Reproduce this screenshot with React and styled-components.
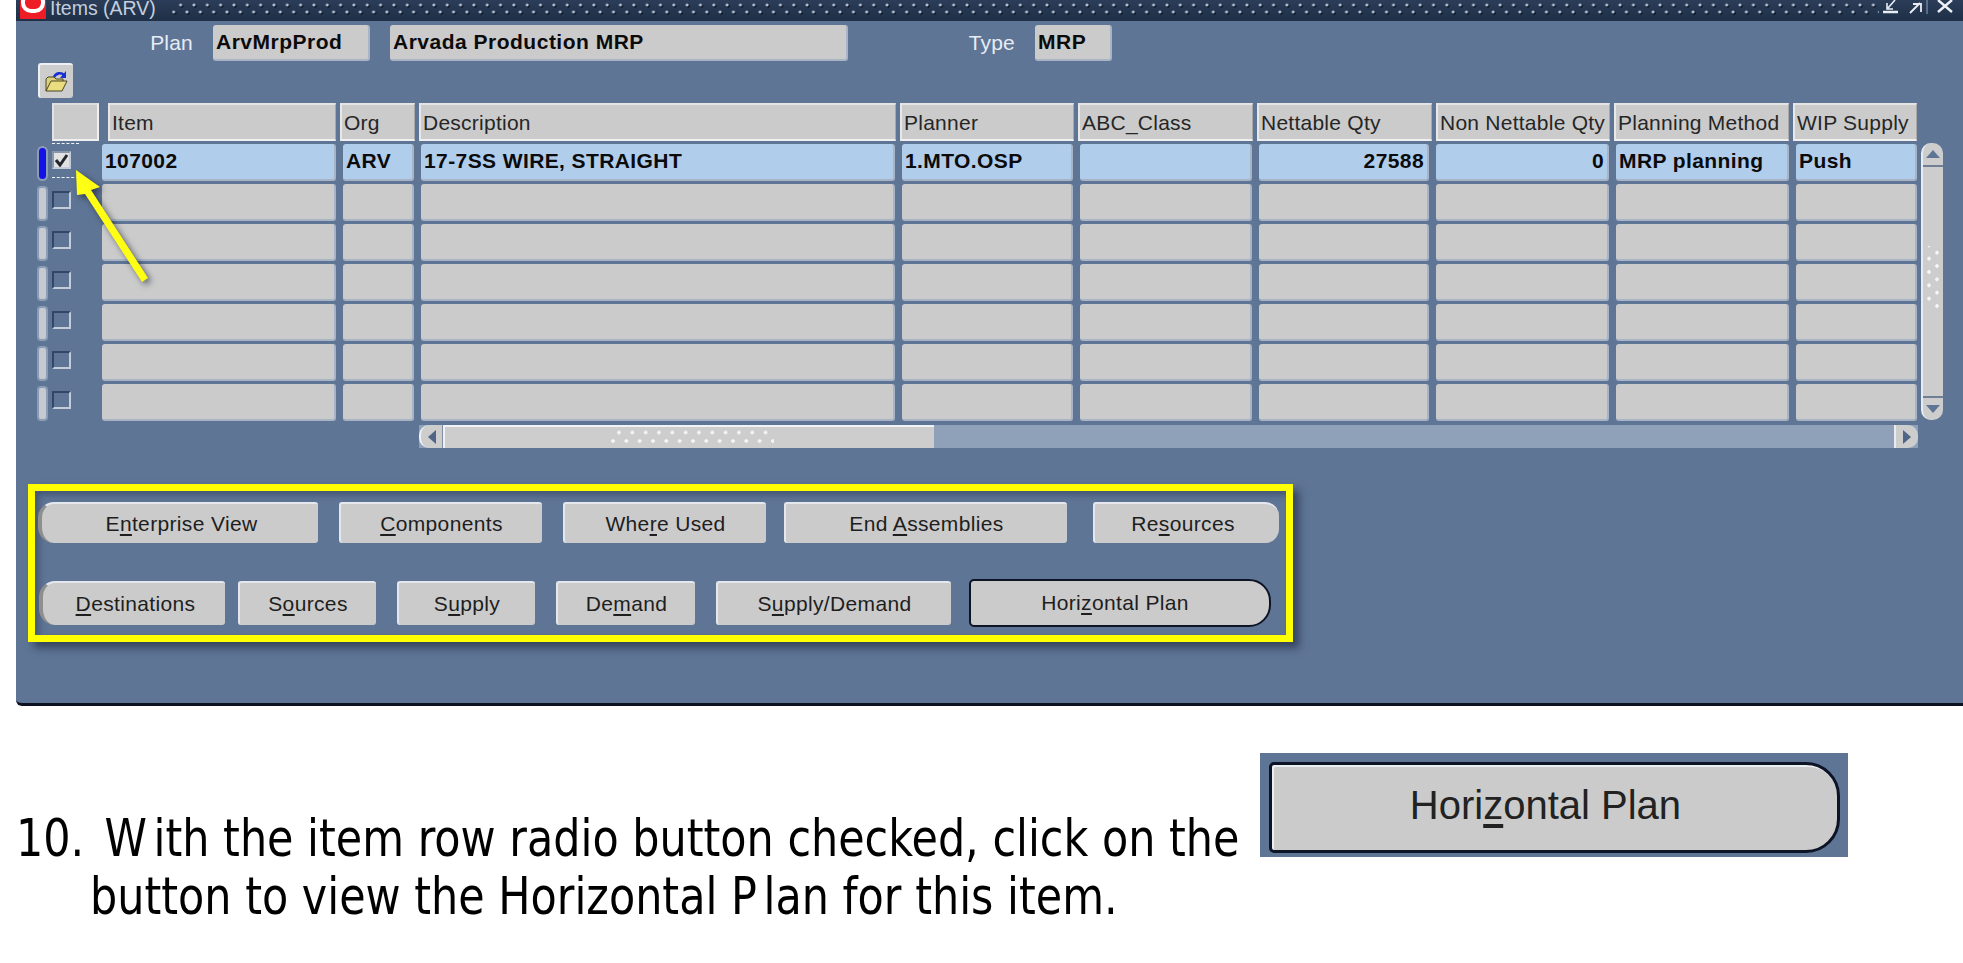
import React from "react";
import styled, { createGlobalStyle } from "styled-components";

const GlobalStyle = createGlobalStyle`
  html, body {
    margin: 0;
    padding: 0;
    background: #fff;
    overflow: hidden;
  }
`;

const Page = styled.div`
  width: 1963px;
  height: 963px;
  font-family: "Liberation Sans", Arial, sans-serif;
  overflow: hidden;
`;

const Window = styled.div`
  position: relative;
  margin-left: 16px;
  width: 1947px;
  height: 706px;
  box-sizing: border-box;
  background: #5f7596;
  border-bottom: 3px solid #0b1120;
  border-bottom-left-radius: 6px;
  overflow: hidden;
`;

const TitleBar = styled.div`
  display: flex;
  align-items: flex-start;
  height: 21px;
  background: linear-gradient(#2b3d58, #1e2f47);
`;

const OracleLogo = styled.svg`
  width: 26px;
  height: 19px;
  margin-left: 4px;
  flex: none;
`;

const TitleText = styled.span`
  margin-left: 4px;
  font-size: 19.5px;
  line-height: 16px;
  color: #c3cfdd;
  white-space: nowrap;
`;

const TitleDots = styled.div`
  flex: 1;
  height: 21px;
  margin-left: 16px;
  background-image: radial-gradient(circle, #aebdd0 0 1.2px, transparent 1.8px),
    radial-gradient(circle, #aebdd0 0 1.2px, transparent 1.8px),
    radial-gradient(circle, #0c1626 0 1.4px, transparent 2px),
    radial-gradient(circle, #0c1626 0 1.4px, transparent 2px);
  background-size: 13.33px 14px;
  background-position: 2px -2px, -5px 5px, 3px -1px, -4px 6px;
  background-repeat: repeat-x;
`;

const WindowControls = styled.svg`
  width: 84px;
  height: 21px;
  flex: none;
`;

const PlanRow = styled.div`
  display: flex;
  align-items: center;
  height: 36px;
  margin-top: 4px;
`;

const FieldLabel = styled.label`
  width: ${(p) => p.$w}px;
  margin-right: 20px;
  text-align: right;
  font-size: 21px;
  letter-spacing: 0.2px;
  color: #e6ecf3;
`;

const Field = styled.div`
  width: ${(p) => p.$w}px;
  height: 36px;
  margin-right: ${(p) => p.$mr || 0}px;
  box-sizing: border-box;
  padding: 0 3px;
  background: #cbcbcb;
  border-right: 2px solid #a8b4c6;
  border-bottom: 2px solid #a8b4c6;
  border-radius: 3px;
  font-size: 21px;
  font-weight: 700;
  letter-spacing: 0.5px;
  line-height: 33px;
  color: #0b0b0b;
  white-space: nowrap;
`;

const ToolRow = styled.div`
  height: 35px;
  margin-top: 2px;
  padding-left: 22px;
`;

const ToolButton = styled.div`
  display: flex;
  align-items: center;
  justify-content: center;
  width: 35px;
  height: 35px;
  box-sizing: border-box;
  background: #cdcdcd;
  border-top: 2px solid #eceff3;
  border-left: 2px solid #eceff3;
  border-radius: 3px;
`;

const HeaderRow = styled.div`
  display: flex;
  height: 38px;
  margin-top: 5px;
  padding-left: 36px;
`;

const SelectAll = styled.div`
  width: 47px;
  height: 38px;
  margin-right: 9px;
  box-sizing: border-box;
  background: #cbcbcb;
  border-top: 2px solid #dedede;
  border-left: 2px solid #e2e2e2;
  border-right: 2px solid #f0f0f0;
  border-bottom: 2px solid #f0f0f0;
`;

const HeaderSlot = styled.div`
  width: ${(p) => p.$w}px;
  flex: none;
  box-sizing: border-box;
  padding-right: ${(p) => (p.$last ? 0 : 4)}px;
`;

const HeaderCell = styled.div`
  height: 38px;
  box-sizing: border-box;
  padding-left: 2px;
  background: #cbcbcb;
  border-top: 2px solid #e4e4e4;
  border-left: 2px solid #e8e8e8;
  border-bottom: 2px solid #f0f0f0;
  border-right: 1px solid #a8a8a8;
  font-size: 21px;
  letter-spacing: 0.25px;
  line-height: 35px;
  color: #262626;
  white-space: nowrap;
  overflow: hidden;
`;

const TableArea = styled.div`
  display: flex;
  margin-top: 2px;
  padding-left: 21px;
`;

const Rows = styled.div`
  width: 1880px;
  padding-top: 1px;
`;

const Row = styled.div`
  display: flex;
  height: 40px;
`;

const Indicator = styled.div`
  width: 11px;
  height: 35px;
  margin: 2px 4px 0 0;
  box-sizing: border-box;
  border-radius: ${(p) => (p.$active ? 6 : 4)}px;
  border: 2px solid #8b9db6;
  background: ${(p) => (p.$active ? "#1212e6" : "#c6c9ce")};
`;

const CheckCell = styled.div`
  width: 50px;
  flex: none;
`;

const CheckFocus = styled.div`
  width: 27px;
  height: 35px;
  margin-top: -1px;
  padding-top: 7px;
  box-sizing: border-box;
  border-top: 1px dashed ${(p) => (p.$active ? "#f0f4f8" : "transparent")};
  border-bottom: 1px dashed ${(p) => (p.$active ? "#f0f4f8" : "transparent")};
`;

const CheckBox = styled.div`
  width: 19px;
  height: 18px;
  box-sizing: border-box;
  border-top: 2px solid ${(p) => (p.$checked ? "#8a97aa" : "#33466a")};
  border-left: 2px solid ${(p) => (p.$checked ? "#8a97aa" : "#33466a")};
  border-right: 2px solid #c3ccda;
  border-bottom: 2px solid #c3ccda;
  background: ${(p) => (p.$checked ? "#e2e2e2" : "transparent")};
`;

const CellSlot = styled.div`
  width: ${(p) => p.$w}px;
  flex: none;
  box-sizing: border-box;
  padding-right: ${(p) => (p.$last ? 0 : 7)}px;
`;

const Cell = styled.div`
  height: 37px;
  box-sizing: border-box;
  padding: 0 3px;
  background: ${(p) => (p.$selected ? "#b1cdec" : "#cbcbcb")};
  border-right: 2px solid #a8b4c6;
  border-bottom: 2px solid #a8b4c6;
  border-radius: 3px;
  font-size: 21px;
  font-weight: 700;
  letter-spacing: 0.4px;
  line-height: 34px;
  color: #0b0b0b;
  text-align: ${(p) => (p.$right ? "right" : "left")};
  white-space: nowrap;
`;

const VScroll = styled.div`
  display: flex;
  flex-direction: column;
  width: 22px;
  height: 277px;
  margin-left: 4px;
  box-sizing: border-box;
  background: #cdcdcd;
  border-left: 2px solid #e8ecf1;
  border-radius: 10px;
  overflow: hidden;
`;

const VScrollEnd = styled.div`
  display: flex;
  align-items: center;
  justify-content: center;
  height: 22px;
  flex: none;
  border-${(p) => (p.$end ? "top" : "bottom")}: 2px solid #6f7f96;
`;

const VThumb = styled.div`
  flex: 1;
  display: flex;
  align-items: center;
  padding-left: 4px;
`;

const VGrip = styled.div`
  width: 14px;
  height: 62px;
  margin-top: -10px;
  background-image: radial-gradient(circle, #f4f4f4 0 1.5px, transparent 2.1px),
    radial-gradient(circle, #f4f4f4 0 1.5px, transparent 2.1px);
  background-size: 14px 13.33px, 14px 13.33px;
  background-position: -5px 6px, 3px 0;
`;

const HScroll = styled.div`
  display: flex;
  width: 1499px;
  height: 23px;
  margin: 1px 0 0 403px;
  background: #8fa1b9;
`;

const HScrollLeft = styled.div`
  display: flex;
  align-items: center;
  justify-content: center;
  width: 24px;
  flex: none;
  box-sizing: border-box;
  background: #cdcdcd;
  border-radius: 10px 0 0 10px;
  border-left: 2px solid #eef1f5;
  border-right: 1px solid #7e8ea5;
`;

const HThumb = styled.div`
  display: flex;
  justify-content: center;
  align-items: center;
  width: 491px;
  flex: none;
  box-sizing: border-box;
  background: #cdcdcd;
  border-top: 2px solid #f0f2f5;
  border-left: 2px solid #f0f2f5;
`;

const HGrip = styled.div`
  width: 164px;
  height: 16px;
  margin-left: 4px;
  background-image: radial-gradient(circle, #f4f4f4 0 1.5px, transparent 2.1px),
    radial-gradient(circle, #f4f4f4 0 1.5px, transparent 2.1px);
  background-size: 13.33px 16px;
  background-position: 2.33px -5.5px, -3.67px 3.5px;
  background-repeat: repeat-x;
`;

const HTrackFill = styled.div`
  flex: 1;
`;

const HScrollRight = styled.div`
  display: flex;
  align-items: center;
  justify-content: center;
  width: 24px;
  flex: none;
  box-sizing: border-box;
  background: #cdcdcd;
  border-left: 2px solid #e8ecf1;
  border-radius: 0 10px 10px 0;
`;

const ButtonBox = styled.div`
  width: 1265px;
  height: 158px;
  margin: 36px 0 0 12px;
  padding: 11px 0 0 3px;
  box-sizing: border-box;
  border: 7px solid #ffff00;
  box-shadow: 6px 6px 8px rgba(18, 28, 48, 0.55),
    inset 4px 4px 6px rgba(18, 28, 48, 0.35);
`;

const ButtonRow = styled.div`
  display: flex;
  align-items: ${(p) => (p.$second ? "center" : "flex-start")};
  height: ${(p) => p.$h}px;
  margin-bottom: 38px;
`;

const FormButton = styled.div`
  display: flex;
  align-items: center;
  justify-content: center;
  width: ${(p) => p.$w}px;
  height: ${(p) => p.$h}px;
  margin-left: ${(p) => p.$gap || 0}px;
  flex: none;
  box-sizing: border-box;
  padding-left: ${(p) => (p.$shape === "left" ? 3 : 0)}px;
  padding-right: ${(p) => (p.$shape === "right" ? 8 : 0)}px;
  background: #cbcbcb;
  border-top: 2px solid #e4e7ec;
  border-left: ${(p) => (p.$shape === "left" ? "4px solid #8e8e8e" : "2px solid #e4e7ec")};
  border-radius: ${(p) =>
    p.$shape === "left"
      ? "16px 3px 3px 16px"
      : p.$shape === "right"
      ? "3px 14px 14px 3px"
      : "3px"};
  font-size: 21px;
  letter-spacing: 0.35px;
  color: #1e1e1e;
  white-space: nowrap;

  u {
    text-underline-offset: 3px;
  }
`;

const DefaultButton = styled(FormButton)`
  padding-right: 10px;
  border: 2px solid #0d1426;
  border-radius: 5px 22px 22px 5px;
  background: #cbcbcb;
`;

const Instructions = styled.div`
  margin-top: 47px;
  color: #000;
  font-family: "DejaVu Sans", sans-serif;
  font-size: 52px;
  line-height: 58px;
`;

const FirstLine = styled.div`
  display: flex;
  align-items: flex-start;
`;

const LineText = styled.div`
  width: ${(p) => p.$w}px;
  margin: ${(p) => p.$top || 0}px 0 0 ${(p) => p.$left}px;
  flex: none;
  white-space: nowrap;
  transform: scaleX(${(p) => p.$sx});
  transform-origin: left center;
`;

const Kern = styled.span`
  margin-left: 8px;
`;

const ButtonSnippet = styled.div`
  width: 588px;
  height: 104px;
  flex: none;
  padding: 9px 8px 4px 9px;
  box-sizing: border-box;
  background: #5f7596;
`;

const SnippetButton = styled.div`
  display: flex;
  align-items: center;
  justify-content: center;
  height: 91px;
  box-sizing: border-box;
  padding: 0 18px 6px 0;
  background: #cbcbcb;
  border: 3px solid #0d1426;
  border-radius: 5px 34px 34px 5px;
  box-shadow: inset 2px 2px 0 #eceff2;
  font-family: "Liberation Sans", Arial, sans-serif;
  font-size: 40px;
  line-height: 48px;
  color: #222;

  u {
    text-underline-offset: 5px;
  }
`;

const ArrowOverlay = styled.svg`
  position: absolute;
  left: 44px;
  top: 160px;
  width: 110px;
  height: 135px;
  overflow: visible;
  filter: drop-shadow(3px 3px 3px rgba(15, 22, 40, 0.6));
`;

const headers = [
  ["Item", 232],
  ["Org", 79],
  ["Description", 481],
  ["Planner", 178],
  ["ABC_Class", 179],
  ["Nettable Qty", 179],
  ["Non Nettable Qty", 178],
  ["Planning Method", 179],
  ["WIP Supply", 124],
];

const cellWidths = [241, 78, 481, 178, 179, 177, 180, 180, 121];

const firstRow = [
  "107002",
  "ARV",
  "17-7SS WIRE, STRAIGHT",
  "1.MTO.OSP",
  "",
  "27588",
  "0",
  "MRP planning",
  "Push",
];

function TableRow({ values, selected }) {
  return (
    <Row>
      <Indicator $active={selected} />
      <CheckCell>
        <CheckFocus $active={selected}>
          <CheckBox $checked={selected}>
            {selected && (
              <svg width="15" height="14" viewBox="0 0 15 14">
                <path d="M2 7l4 5L13 2" fill="none" stroke="#23262e" strokeWidth="3" />
              </svg>
            )}
          </CheckBox>
        </CheckFocus>
      </CheckCell>
      {cellWidths.map((w, i) => (
        <CellSlot key={i} $w={w} $last={i === cellWidths.length - 1}>
          <Cell $selected={selected} $right={i === 5 || i === 6}>
            {values ? values[i] : ""}
          </Cell>
        </CellSlot>
      ))}
    </Row>
  );
}

function FolderIcon() {
  return (
    <svg width="25" height="24" viewBox="0 0 25 24">
      <path d="M10 7c2-4 7-5 10-2" fill="none" stroke="#1a2fd0" strokeWidth="2.6" />
      <path d="M22 1v7h-6z" fill="#1a2fd0" />
      <path d="M2 21V9l2-2h6l2 2h7v3H8z" fill="#d9cf7c" stroke="#4a4420" strokeWidth="1" />
      <path d="M2 21l5-10h16l-5 10z" fill="#e9dd80" stroke="#4a4420" strokeWidth="1" />
    </svg>
  );
}

export default function App() {
  return (
    <Page>
      <GlobalStyle />
      <Window>
        <TitleBar>
          <OracleLogo viewBox="0 0 26 19">
            <rect width="26" height="19" rx="1" fill="#ee1c25" />
            <rect x="3" y="-6" width="20" height="17" rx="8" fill="none" stroke="#fff" strokeWidth="4" />
          </OracleLogo>
          <TitleText>Items (ARV)</TitleText>
          <TitleDots />
          <WindowControls viewBox="0 0 84 21">
            <path d="M4 12h15" stroke="#e8edf3" strokeWidth="2.5" />
            <path d="M16 0l-7 8M8 3v6h6" fill="none" stroke="#e8edf3" strokeWidth="1.6" />
            <path d="M31 13l10-10M34 4h8v8" fill="none" stroke="#e8edf3" strokeWidth="1.8" />
            <path d="M48 0v14" stroke="#8fa1b9" strokeWidth="1" />
            <path d="M59 0l14 12M73 0L59 12" stroke="#eef2f6" strokeWidth="2.4" />
          </WindowControls>
        </TitleBar>

        <PlanRow>
          <FieldLabel $w={177}>Plan</FieldLabel>
          <Field $w={157} $mr={20}>ArvMrpProd</Field>
          <Field $w={458}>Arvada Production MRP</Field>
          <FieldLabel $w={167}>Type</FieldLabel>
          <Field $w={77}>MRP</Field>
        </PlanRow>

        <ToolRow>
          <ToolButton>
            <FolderIcon />
          </ToolButton>
        </ToolRow>

        <HeaderRow>
          <SelectAll />
          {headers.map(([label, w], i) => (
            <HeaderSlot key={label} $w={w} $last={i === headers.length - 1}>
              <HeaderCell>{label}</HeaderCell>
            </HeaderSlot>
          ))}
        </HeaderRow>

        <TableArea>
          <Rows>
            <TableRow values={firstRow} selected />
            {[0, 1, 2, 3, 4, 5].map((n) => (
              <TableRow key={n} />
            ))}
          </Rows>
          <VScroll>
            <VScrollEnd>
              <svg width="14" height="8" viewBox="0 0 14 8">
                <path d="M7 0l7 8H0z" fill="#5f7596" />
              </svg>
            </VScrollEnd>
            <VThumb>
              <VGrip />
            </VThumb>
            <VScrollEnd $end>
              <svg width="14" height="8" viewBox="0 0 14 8">
                <path d="M7 8L0 0h14z" fill="#5f7596" />
              </svg>
            </VScrollEnd>
          </VScroll>
        </TableArea>

        <HScroll>
          <HScrollLeft>
            <svg width="8" height="14" viewBox="0 0 8 14">
              <path d="M0 7l8-7v14z" fill="#4f6486" />
            </svg>
          </HScrollLeft>
          <HThumb>
            <HGrip />
          </HThumb>
          <HTrackFill />
          <HScrollRight>
            <svg width="8" height="14" viewBox="0 0 8 14">
              <path d="M8 7L0 0v14z" fill="#4f6486" />
            </svg>
          </HScrollRight>
        </HScroll>

        <ButtonBox>
          <ButtonRow $h={41}>
            <FormButton $w={280} $h={41} $shape="left">
              <span>E<u>n</u>terprise View</span>
            </FormButton>
            <FormButton $w={203} $h={41} $gap={21}>
              <span><u>C</u>omponents</span>
            </FormButton>
            <FormButton $w={203} $h={41} $gap={21}>
              <span>Whe<u>r</u>e Used</span>
            </FormButton>
            <FormButton $w={283} $h={41} $gap={18}>
              <span>End <u>A</u>ssemblies</span>
            </FormButton>
            <FormButton $w={186} $h={41} $gap={26} $shape="right">
              <span>Re<u>s</u>ources</span>
            </FormButton>
          </ButtonRow>
          <ButtonRow $h={44} $second>
            <FormButton $w={186} $h={44} $gap={1} $shape="left">
              <span><u>D</u>estinations</span>
            </FormButton>
            <FormButton $w={138} $h={44} $gap={13}>
              <span>S<u>o</u>urces</span>
            </FormButton>
            <FormButton $w={138} $h={44} $gap={21}>
              <span>S<u>u</u>pply</span>
            </FormButton>
            <FormButton $w={139} $h={44} $gap={21}>
              <span>De<u>m</u>and</span>
            </FormButton>
            <FormButton $w={235} $h={44} $gap={21}>
              <span>S<u>u</u>pply/Demand</span>
            </FormButton>
            <DefaultButton $w={302} $h={48} $gap={18}>
              <span>Hori<u>z</u>ontal Plan</span>
            </DefaultButton>
          </ButtonRow>
        </ButtonBox>

        <ArrowOverlay viewBox="0 0 110 135">
          <path d="M16 10L40 27 31 30 88 118 82 122 25 34 17 35z" fill="#ffff14" />
        </ArrowOverlay>
      </Window>

      <Instructions>
        <FirstLine>
          <LineText $w={1244} $left={16} $top={56} $sx={0.825}>
            10.<Kern> W</Kern><Kern>ith</Kern> the item row radio button checked, click on the
          </LineText>
          <ButtonSnippet>
            <SnippetButton>
              <span>Hori<u>z</u>ontal Plan</span>
            </SnippetButton>
          </ButtonSnippet>
        </FirstLine>
        <LineText $w={1100} $left={90} $sx={0.825}>
          button to view the Horizontal P<Kern>lan</Kern> for this item.
        </LineText>
      </Instructions>
    </Page>
  );
}
